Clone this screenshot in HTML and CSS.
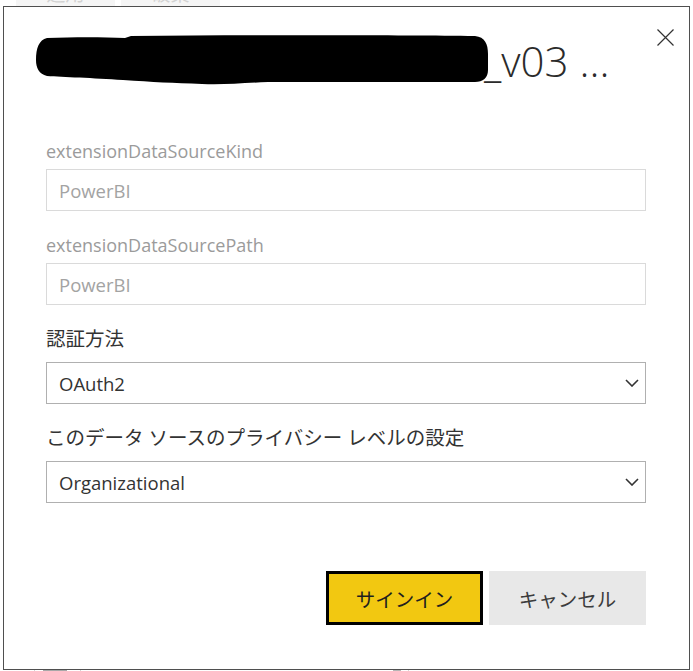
FILE: index.html
```html
<!DOCTYPE html>
<html lang="ja">
<head>
<meta charset="utf-8">
<title>データソース資格情報</title>
<link rel="stylesheet" href="styles.css">
</head>
<body>
<div class="bg-tabs">
  <div class="bg-tab"><span>適用</span></div>
  <div class="bg-tab"><span>破棄</span></div>
</div>
<div class="dialog">
  <div class="header">
    <div class="title">
      <svg class="redact" width="456" height="54" viewBox="30 31 456 54" aria-hidden="true">
        <path d="M44 36 C70 35 100 35 122 36 L128 34 C250 33 400 33 472 34 C482 35 485 42 485 52 L485 68 C485 76 480 80 472 80 C400 80 300 80 265 80 C240 81 220 83 199 82 C170 81 150 80 120 78 C90 76 60 75 44 74 C36 72 33 66 33 58 C33 46 36 38 44 36 Z" fill="#000"/>
      </svg>
      <span class="title-text">_v03 ...</span>
    </div>
    <button class="close" aria-label="閉じる">
      <svg width="17" height="17" viewBox="0 0 17 17"><path d="M0.5 0.5 L16.5 16.5 M16.5 0.5 L0.5 16.5" stroke="#333" stroke-width="1.2" fill="none"/></svg>
    </button>
  </div>
  <div class="form">
    <div class="group">
      <div class="label disabled">extensionDataSourceKind</div>
      <div class="input disabled">PowerBI</div>
    </div>
    <div class="group">
      <div class="label disabled">extensionDataSourcePath</div>
      <div class="input disabled">PowerBI</div>
    </div>
    <div class="group">
      <div class="label jp">認証方法</div>
      <div class="select"><span>OAuth2</span>
        <svg width="14" height="8" viewBox="0 0 14 8"><polyline points="1,1 7,7 13,1" stroke="#333" stroke-width="1.6" fill="none"/></svg>
      </div>
    </div>
    <div class="group">
      <div class="label jp">このデータ ソースのプライバシー レベルの設定</div>
      <div class="select"><span>Organizational</span>
        <svg width="14" height="8" viewBox="0 0 14 8"><polyline points="1,1 7,7 13,1" stroke="#333" stroke-width="1.6" fill="none"/></svg>
      </div>
    </div>
  </div>
  <div class="actions">
    <button class="btn primary">サインイン</button>
    <button class="btn secondary">キャンセル</button>
  </div>
</div>
<div class="bottom-peek">
  <span class="pk a"></span><span class="pk b"></span><span class="pk c"></span><span class="pk d"></span><span class="pk e"></span>
</div>
</body>
</html>
```

FILE: styles.css
```css
* { box-sizing: border-box; }

html, body {
  margin: 0;
  padding: 0;
  background: #fff;
}

body {
  width: 693px;
  height: 671px;
  overflow: hidden;
  font-family: "Open Sans", "Noto Sans CJK JP", sans-serif;
  color: #333;
}

.bg-tabs {
  display: flex;
  gap: 6px;
  padding-left: 16px;
  height: 6px;
  overflow: hidden;
}

.bg-tab {
  width: 99px;
  height: 6px;
  background: #f5f5f5;
  display: flex;
  justify-content: center;
  align-items: flex-end;
  overflow: hidden;
}

.bg-tab span {
  font-size: 19px;
  line-height: 20px;
  color: #d2d2d2;
  margin-bottom: 2px;
  flex: none;
}

.dialog {
  margin-left: 3px;
  width: 687px;
  height: 664px;
  border: 1px solid #4f4f4f;
  background: #fff;
  padding: 0 43px 0 42px;
  display: flex;
  flex-direction: column;
}

.header {
  height: 132px;
  display: flex;
  justify-content: space-between;
  align-items: flex-start;
  margin: 0 -28px 0 -13px;
  padding-top: 22px;
}

.title {
  display: flex;
  align-items: flex-start;
  margin-top: 4px;
}

.redact {
  display: block;
  position: relative;
  z-index: 1;
  flex: none;
}

.title-text {
  font-size: 42px;
  font-weight: 300;
  line-height: 42px;
  color: #2b2b2b;
  margin-left: -5px;
  margin-top: 7px;
  white-space: nowrap;
}

.close {
  border: 0;
  background: transparent;
  padding: 0;
  width: 17px;
  height: 17px;
  display: block;
}

.close svg { display: block; }

.form {
  display: flex;
  flex-direction: column;
  gap: 22px;
}

.label {
  font-size: 18px;
  line-height: 24px;
  margin-bottom: 6px;
  color: #333;
  white-space: nowrap;
}

.label.disabled { color: #9b9b9b; }

.label.jp {
  font-size: 19.5px;
  margin-bottom: 11px;
}

.input, .select {
  height: 42px;
  border: 1px solid #dadada;
  font-size: 18.5px;
  display: flex;
  align-items: center;
  padding-left: 12px;
}

.input.disabled { color: #a3a3a3; }

.select {
  border-color: #b0b0b0;
  color: #333;
  justify-content: space-between;
  padding-right: 6px;
}

.select svg { display: block; }

.actions {
  margin-top: 68px;
  display: flex;
  justify-content: flex-end;
  gap: 6px;
}

.btn {
  width: 157px;
  height: 54px;
  font-family: "Noto Sans CJK JP", sans-serif;
  font-size: 19.5px;
  padding: 0;
  cursor: pointer;
}

.btn.primary {
  background: #f2c811;
  border: 3px solid #000;
  color: #1f1f1f;
}

.btn.secondary {
  background: #e8e8e8;
  border: 0;
  color: #3c3c3c;
}

.bottom-peek {
  height: 1px;
  position: relative;
  display: flex;
}

.pk { display: block; height: 1px; }
.pk.a { margin-left: 34px; width: 1px; background: #d5d5d5; }
.pk.b { margin-left: 8px; width: 24px; background: #a8a8a8; }
.pk.c { margin-left: 13px; width: 1px; background: #d5d5d5; }
.pk.d { margin-left: 312px; width: 8px; background: #b5b5b5; }
.pk.e { margin-left: 7px; width: 1px; background: #d5d5d5; }
```
